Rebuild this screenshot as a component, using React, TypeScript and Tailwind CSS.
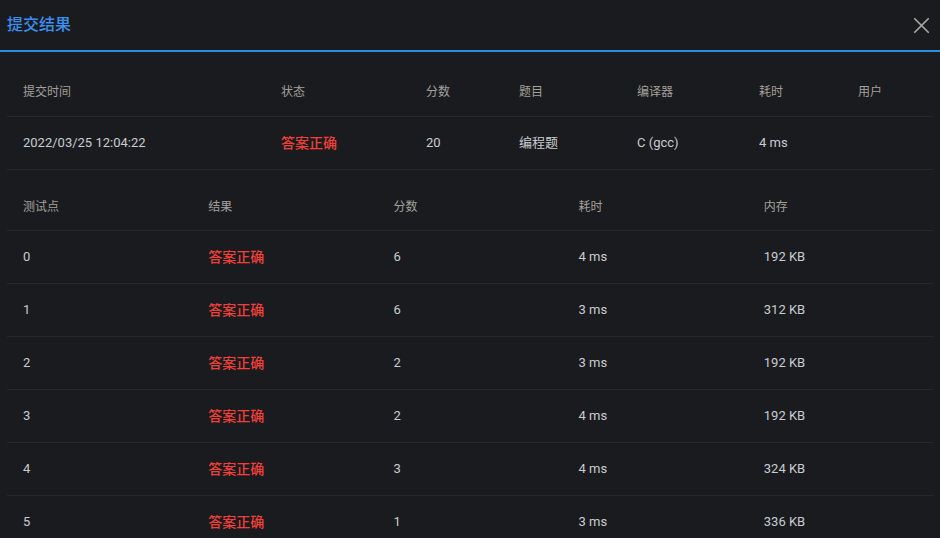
import { X } from "lucide-react";

type Summary = { time: string; status: string; score: number; problem: string; compiler: string; cost: string; user: string };
type Case = { id: number; result: string; score: number; cost: string; mem: string };

const summary: Summary = {
  time: "2022/03/25 12:04:22",
  status: "答案正确",
  score: 20,
  problem: "编程题",
  compiler: "C (gcc)",
  cost: "4 ms",
  user: "",
};

const cases: Case[] = [
  { id: 0, result: "答案正确", score: 6, cost: "4 ms", mem: "192 KB" },
  { id: 1, result: "答案正确", score: 6, cost: "3 ms", mem: "312 KB" },
  { id: 2, result: "答案正确", score: 2, cost: "3 ms", mem: "192 KB" },
  { id: 3, result: "答案正确", score: 2, cost: "4 ms", mem: "192 KB" },
  { id: 4, result: "答案正确", score: 3, cost: "4 ms", mem: "324 KB" },
  { id: 5, result: "答案正确", score: 1, cost: "3 ms", mem: "336 KB" },
];

const summaryCols = "grid grid-cols-[258px_145px_93px_118px_122px_99px_1fr]";
const caseCols = "grid grid-cols-5";

export default function App() {
  return (
    <div
      className="w-[940px] h-[538px] overflow-hidden bg-[#1a1b1e] text-[13px] text-[#c9ccd1]"
      style={{ fontFamily: 'Roboto, "Noto Sans CJK SC", sans-serif' }}
    >
      {/* Header */}
      <div className="flex items-center justify-between h-[50px] pl-[7px] pr-[5px]">
        <h1 className="text-[16px] font-medium text-[#3a8ff0] leading-none">提交结果</h1>
        <X className="w-[27px] h-[27px] text-[#a9a6a0]" strokeWidth={1.5} />
      </div>
      <div className="h-[2px] bg-[#2f8ce6]" />

      <div className="px-[7px] pt-[16px]">
        {/* Summary table */}
        <div className={`${summaryCols} h-[49px] items-center border-b border-[#26272b] text-[12px] text-[#a3a09b]`}>
          {["提交时间", "状态", "分数", "题目", "编译器", "耗时", "用户"].map((h) => (
            <div key={h} className="pl-4">{h}</div>
          ))}
        </div>
        <div className={`${summaryCols} h-[53px] items-center border-b border-[#26272b]`}>
          <div className="pl-4">{summary.time}</div>
          <div className="pl-4 text-[14px] font-medium text-[#f0403a]">{summary.status}</div>
          <div className="pl-4">{summary.score}</div>
          <div className="pl-4">{summary.problem}</div>
          <div className="pl-4">{summary.compiler}</div>
          <div className="pl-4">{summary.cost}</div>
          <div className="pl-4">{summary.user}</div>
        </div>

        {/* Test cases */}
        <div className={`${caseCols} mt-[14px] h-[47px] items-center border-b border-[#26272b] text-[12px] text-[#a3a09b]`}>
          {["测试点", "结果", "分数", "耗时", "内存"].map((h) => (
            <div key={h} className="pl-4">{h}</div>
          ))}
        </div>
        {cases.map((c) => (
          <div key={c.id} className={`${caseCols} h-[53px] items-center border-b border-[#26272b]`}>
            <div className="pl-4">{c.id}</div>
            <div className="pl-4 text-[14px] font-medium text-[#f0403a]">{c.result}</div>
            <div className="pl-4">{c.score}</div>
            <div className="pl-4">{c.cost}</div>
            <div className="pl-4">{c.mem}</div>
          </div>
        ))}
      </div>
    </div>
  );
}
